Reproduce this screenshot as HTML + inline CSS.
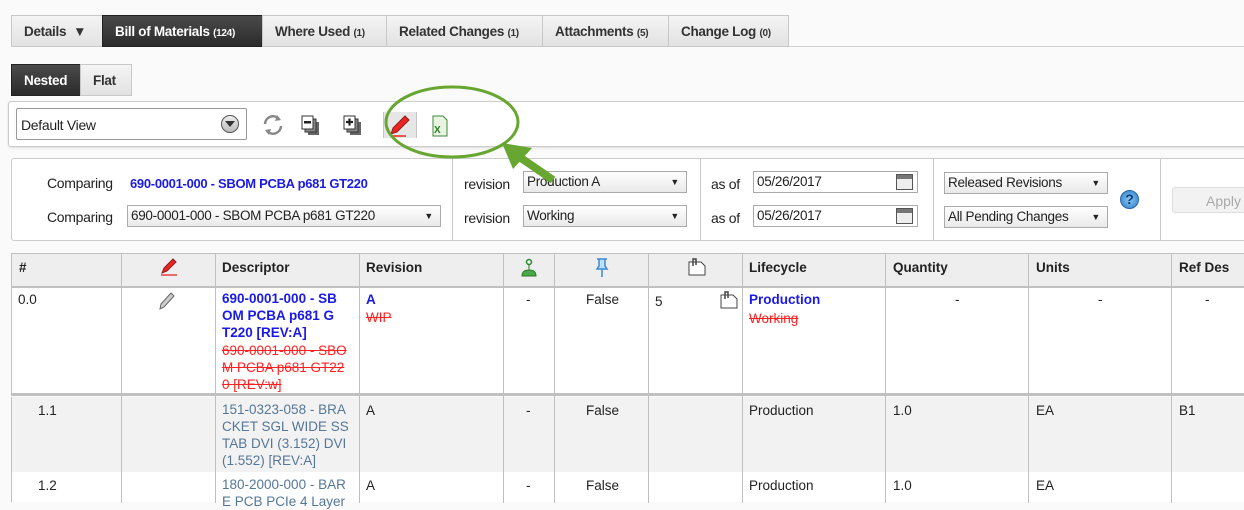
<!DOCTYPE html>
<html><head><meta charset="utf-8"><style>
*{box-sizing:border-box;margin:0;padding:0}
body{width:1244px;height:500px;overflow:hidden;background:#fafafa;font-family:"Liberation Sans",Arial,sans-serif;font-size:13px;color:#222;position:relative}
.a{position:absolute}
.tab{position:absolute;top:15px;height:32px;border:1px solid #c8c8c8;background:linear-gradient(#f4f4f4,#e2e2e2);font-weight:bold;font-size:13.5px;color:#333;padding:8px 12px;white-space:nowrap;letter-spacing:-0.3px}
.tab small{font-size:10px;font-weight:bold}
.dark{background:linear-gradient(#4a4a4a,#2b2b2b);color:#fff;border-color:#222}
.sel{position:absolute;height:22px;border:1px solid #aaa;background:linear-gradient(#fff,#e9e9e9);font-size:13.5px;padding:2px 3px;white-space:nowrap;letter-spacing:-0.3px}
.sel:after{content:"▼";position:absolute;right:7px;top:5px;font-size:9px;color:#222}
.inp{position:absolute;height:22px;border:1px solid #aaa;background:#fff;font-size:13.5px;padding:2px 3px;letter-spacing:-0.3px}
.cal{position:absolute;right:4px;top:2px;width:17px;height:16px;border:1px solid #555;background:linear-gradient(#777 0 4px,#eee 4px)}
.lbl{position:absolute;font-size:14px;letter-spacing:-0.3px}
.vl{position:absolute;width:1px;background:#c9c9c9}
.hl{position:absolute;height:1px;background:#c0c0c0}
.c{position:absolute;font-size:13.5px;line-height:19px}
.b{font-weight:bold}
.blue{color:#1a1ae6}
.red{color:#ff2020;text-decoration:line-through}
.gr{color:#557799}
</style></head><body>
<div class="hl" style="left:11px;top:46px;width:1233px;background:#d0d0d0"></div>
<div class="tab" style="left:11px;width:92px">Details &nbsp;▼</div>
<div class="tab dark" style="left:102px;width:161px">Bill of Materials <small>(124)</small></div>
<div class="tab" style="left:262px;width:125px">Where Used <small>(1)</small></div>
<div class="tab" style="left:386px;width:157px">Related Changes <small>(1)</small></div>
<div class="tab" style="left:542px;width:127px">Attachments <small>(5)</small></div>
<div class="tab" style="left:668px;width:121px">Change Log <small>(0)</small></div>

<div class="tab dark" style="left:11px;top:64px;height:32px;width:70px">Nested</div>
<div class="tab" style="left:80px;top:64px;height:32px;width:52px">Flat</div>

<div class="a" style="left:8px;top:101px;width:1240px;height:46px;border:1px solid #ccc;border-radius:3px;background:#fff;box-shadow:0 1px 2px #ddd"></div>
<div class="a" style="left:16px;top:108px;width:231px;height:32px;border:1px solid #999;border-radius:2px;background:#fff;font-size:14px;padding:8px 4px;letter-spacing:-0.3px">Default View
<div class="a" style="left:204px;top:6px;width:18px;height:18px;border-radius:50%;border:1px solid #555;background:linear-gradient(#eee,#bbb)"><div class="a" style="left:3px;top:5px;border-left:5px solid transparent;border-right:5px solid transparent;border-top:6px solid #333"></div></div></div>
<svg class="a" style="left:260px;top:112px" width="200" height="26">
<path d="M5 12a8 8 0 0 1 14-5M21 14a8 8 0 0 1-14 5" fill="none" stroke="#888" stroke-width="2.5"/><path d="M17 3l4 5-6 1zM9 23l-4-5 6-1z" fill="#888"/>
<rect x="48" y="10" width="11" height="13" fill="#666"/><rect x="45" y="7" width="11" height="13" fill="#888" stroke="#333"/><rect x="42" y="4" width="11" height="13" fill="#fff" stroke="#333"/><rect x="44" y="9" width="7" height="2.5" fill="#222"/>
<rect x="90" y="10" width="11" height="13" fill="#666"/><rect x="87" y="7" width="11" height="13" fill="#888" stroke="#333"/><rect x="84" y="4" width="11" height="13" fill="#fff" stroke="#333"/><path d="M86 10h7M89.5 6.5v7" stroke="#222" stroke-width="2.2"/>
<rect x="123.5" y="-5" width="33" height="35" fill="#e6e6e6" stroke="#c5c5c5"/>
<path d="M131 22l2-6 12-12 4 4-12 12z" fill="#e22" stroke="#822"/><path d="M131 24h15" stroke="#e22" stroke-width="1.5"/>
<path d="M173 4h10l4 4v16h-14z" fill="#e8f4e0" stroke="#3a8a3a"/><text x="174" y="21" font-size="10" font-weight="bold" fill="#2a7a2a" font-family="Liberation Sans">X</text>
</svg>

<div class="a" style="left:11px;top:158px;width:1240px;height:83px;border:1px solid #ccc;border-radius:3px;background:#fff"></div>
<div class="vl" style="left:452px;top:159px;height:81px"></div>
<div class="vl" style="left:700px;top:159px;height:81px"></div>
<div class="vl" style="left:933px;top:159px;height:81px"></div>
<div class="vl" style="left:1160px;top:159px;height:81px"></div>
<div class="lbl" style="left:47px;top:175px">Comparing</div>
<div class="lbl b blue" style="left:130px;top:176px;font-size:13px">690-0001-000 - SBOM PCBA p681 GT220</div>
<div class="lbl" style="left:47px;top:209px">Comparing</div>
<div class="sel" style="left:127px;top:205px;width:314px">690-0001-000 - SBOM PCBA p681 GT220</div>
<div class="lbl" style="left:464px;top:176px">revision</div>
<div class="sel" style="left:523px;top:171px;width:164px">Production A</div>
<div class="lbl" style="left:464px;top:210px">revision</div>
<div class="sel" style="left:523px;top:205px;width:164px">Working</div>
<div class="lbl" style="left:711px;top:176px">as of</div>
<div class="inp" style="left:753px;top:171px;width:165px">05/26/2017<div class="cal"></div></div>
<div class="lbl" style="left:711px;top:210px">as of</div>
<div class="inp" style="left:753px;top:205px;width:165px">05/26/2017<div class="cal"></div></div>
<div class="sel" style="left:944px;top:172px;width:164px">Released Revisions</div>
<div class="sel" style="left:944px;top:206px;width:164px">All Pending Changes</div>
<div class="a" style="left:1120px;top:190px;width:19px;height:19px;border-radius:50%;background:radial-gradient(#8cc8f2,#2b7bc6);border:1px solid #2266aa;color:#0b3d7a;font-weight:bold;font-size:14px;text-align:center;line-height:17px">?</div>
<div class="a" style="left:1172px;top:187px;width:80px;height:26px;border:1px solid #ddd;border-radius:3px;background:#f2f2f2;color:#aaa;font-size:14px;padding:5px 0 0 33px">Apply</div>

<!-- table -->
<div class="a" style="left:11px;top:253px;width:1240px;height:34px;background:#eee;border:1px solid #c0c0c0"></div>
<div class="a" style="left:11px;top:287px;width:1240px;height:109px;background:#fff;border-left:1px solid #c0c0c0;border-top:1px solid #c0c0c0;border-bottom:3px solid #c0c0c0"></div>
<div class="a" style="left:11px;top:397px;width:1240px;height:75px;background:#f2f2f2;border-left:1px solid #c0c0c0"></div>
<div class="a" style="left:11px;top:472px;width:1240px;height:30px;background:#fff;border-left:1px solid #c0c0c0"></div>
<div class="vl" style="left:121px;top:253px;height:250px;background:#c0c0c0"></div>
<div class="vl" style="left:215px;top:253px;height:250px;background:#c0c0c0"></div>
<div class="vl" style="left:359px;top:253px;height:250px;background:#c0c0c0"></div>
<div class="vl" style="left:503px;top:253px;height:250px;background:#c0c0c0"></div>
<div class="vl" style="left:554px;top:253px;height:250px;background:#c0c0c0"></div>
<div class="vl" style="left:648px;top:253px;height:250px;background:#c0c0c0"></div>
<div class="vl" style="left:742px;top:253px;height:250px;background:#c0c0c0"></div>
<div class="vl" style="left:885px;top:253px;height:250px;background:#c0c0c0"></div>
<div class="vl" style="left:1028px;top:253px;height:250px;background:#c0c0c0"></div>
<div class="vl" style="left:1171px;top:253px;height:250px;background:#c0c0c0"></div>

<div class="c b" style="left:19px;top:258px">#</div>
<svg class="a" style="left:159px;top:257px" width="20" height="20"><path d="M3 16l2-5 9-9 3 3-9 9z" fill="#e22" stroke="#822"/><path d="M2 18h16" stroke="#e22" stroke-width="1.3"/></svg>
<div class="c b" style="left:222px;top:258px">Descriptor</div>
<div class="c b" style="left:366px;top:258px">Revision</div>
<svg class="a" style="left:520px;top:258px" width="20" height="20"><circle cx="9" cy="4" r="2.5" fill="none" stroke="#2a8a2a" stroke-width="1.5"/><path d="M9 6v6M2 18q0-6 7-6t7 6z" fill="#4aa84a" stroke="#2a7a2a"/></svg>
<svg class="a" style="left:594px;top:257px" width="16" height="22"><path d="M3 2h10M5 2v7l-2 3h10l-2-3V2M8 12v8" fill="#bfe0f7" stroke="#3a8ad0" stroke-width="1.5"/></svg>
<svg class="a" style="left:687px;top:257px" width="20" height="20"><path d="M2 5h12l4 4v9H2z" fill="#fff" stroke="#444"/><path d="M6 9V2h3v6" fill="none" stroke="#444" stroke-width="1.5"/></svg>
<div class="c b" style="left:749px;top:258px">Lifecycle</div>
<div class="c b" style="left:893px;top:258px">Quantity</div>
<div class="c b" style="left:1036px;top:258px">Units</div>
<div class="c b" style="left:1179px;top:258px">Ref Des</div>

<div class="c" style="left:18px;top:290px">0.0</div>
<svg class="a" style="left:157px;top:291px" width="20" height="20"><path d="M3 18l1-5 10-11 3 3-10 11z" fill="#ccc" stroke="#666"/></svg>
<div class="c b blue" style="left:222px;top:290px;width:136px;line-height:17px">690-0001-000 - SB<br>OM PCBA p681 G<br>T220 [REV:A]</div>
<div class="c red" style="left:222px;top:342px;width:136px;line-height:17px">690-0001-000 - SBO<br>M PCBA p681 GT22<br>0 [REV:w]</div>
<div class="c b blue" style="left:366px;top:290px">A</div>
<div class="c red" style="left:366px;top:308px">WIP</div>
<div class="c" style="left:526px;top:290px">-</div>
<div class="c" style="left:586px;top:290px">False</div>
<div class="c" style="left:655px;top:292px">5</div>
<svg class="a" style="left:719px;top:290px" width="20" height="20"><path d="M2 5h12l4 4v9H2z" fill="#fff" stroke="#444"/><path d="M6 9V2h3v6" fill="none" stroke="#444" stroke-width="1.5"/></svg>
<div class="c b blue" style="left:749px;top:290px">Production</div>
<div class="c red" style="left:749px;top:309px">Working</div>
<div class="c" style="left:955px;top:290px">-</div>
<div class="c" style="left:1098px;top:290px">-</div>
<div class="c" style="left:1205px;top:290px">-</div>

<div class="c" style="left:38px;top:401px">1.1</div>
<div class="c gr" style="left:222px;top:401px;width:136px;line-height:17px">151-0323-058 - BRA<br>CKET SGL WIDE SS<br>TAB DVI (3.152) DVI<br>(1.552) [REV:A]</div>
<div class="c" style="left:366px;top:401px">A</div>
<div class="c" style="left:526px;top:401px">-</div>
<div class="c" style="left:586px;top:401px">False</div>
<div class="c" style="left:749px;top:401px">Production</div>
<div class="c" style="left:893px;top:401px">1.0</div>
<div class="c" style="left:1036px;top:401px">EA</div>
<div class="c" style="left:1179px;top:401px">B1</div>

<div class="c" style="left:38px;top:476px">1.2</div>
<div class="c gr" style="left:222px;top:476px;line-height:17px">180-2000-000 - BAR<br>E PCB PCIe 4 Layer</div>
<div class="c" style="left:366px;top:476px">A</div>
<div class="c" style="left:526px;top:476px">-</div>
<div class="c" style="left:586px;top:476px">False</div>
<div class="c" style="left:749px;top:476px">Production</div>
<div class="c" style="left:893px;top:476px">1.0</div>
<div class="c" style="left:1036px;top:476px">EA</div>

<svg class="a" style="left:0;top:0" width="1244" height="500">
<ellipse cx="452" cy="122" rx="66" ry="35" fill="none" stroke="#68a632" stroke-width="3"/>
<path d="M553 180L518 156" stroke="#68a632" stroke-width="8"/>
<path d="M502 143L532 148L513 169z" fill="#68a632"/>
</svg>
</body></html>
